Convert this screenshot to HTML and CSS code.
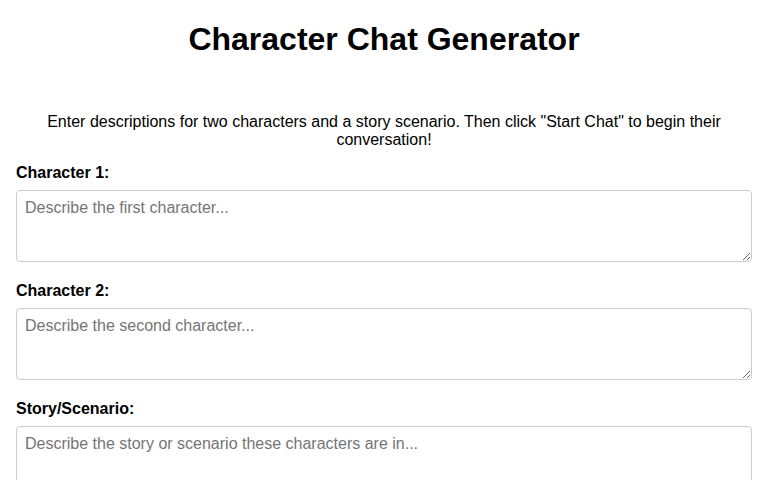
FILE: index.html
```html
<!DOCTYPE html>
<html lang="en">
<head>
<meta charset="utf-8">
<title>Character Chat Generator</title>
<link rel="stylesheet" href="styles.css">
</head>
<body>
<h1 class="title">Character Chat Generator</h1>
<p class="intro">Enter descriptions for two characters and a story scenario. Then click "Start Chat" to begin their conversation!</p>
<div class="field">
  <label class="label" for="c1">Character 1:</label>
  <textarea class="input" id="c1" placeholder="Describe the first character..."></textarea>
</div>
<div class="field">
  <label class="label" for="c2">Character 2:</label>
  <textarea class="input" id="c2" placeholder="Describe the second character..."></textarea>
</div>
<div class="field">
  <label class="label" for="story">Story/Scenario:</label>
  <textarea class="input" id="story" placeholder="Describe the story or scenario these characters are in..."></textarea>
</div>
</body>
</html>
```
FILE: styles.css
```css
body {
  margin: 0;
  padding: 0 16px;
  font-family: "Liberation Sans", Arial, sans-serif;
  color: #000;
  background: #fff;
}
.title {
  font-size: 32px;
  font-weight: bold;
  text-align: center;
  margin: 21px 0 0;
}
.intro {
  font-size: 16px;
  text-align: center;
  margin: 55px 0 15px;
}
.field {
  margin-bottom: 20px;
}
.label {
  display: block;
  font-weight: bold;
  font-size: 16px;
  margin-bottom: 8px;
}
.input {
  display: block;
  width: 100%;
  height: 72px;
  box-sizing: border-box;
  padding: 8px;
  border: 1px solid #ccc;
  border-radius: 4px;
  font-family: "Liberation Sans", Arial, sans-serif;
  font-size: 16px;
  margin: 0;
}
.input::placeholder {
  color: #757575;
}
```
